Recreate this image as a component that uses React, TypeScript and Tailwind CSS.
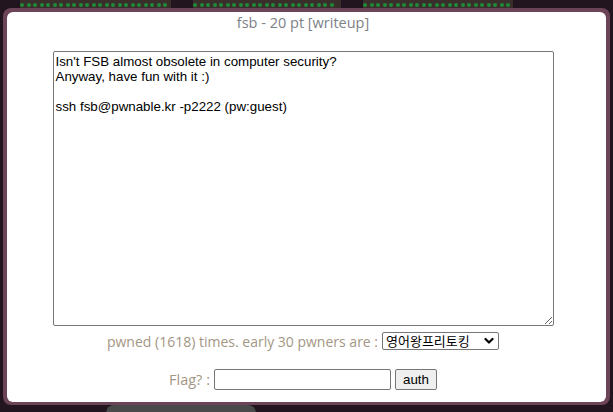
import React from "react";

const TEXT = {
  title: "fsb - 20 pt [writeup]",
  description: "Isn't FSB almost obsolete in computer security?\nAnyway, have fun with it :)\n\nssh fsb@pwnable.kr -p2222 (pw:guest)",
  pwned: "pwned (1618) times. early 30 pwners are :",
  flag: "Flag? :",
  auth: "auth",
};

const PWNERS = ["영어왕프리토킹", "hacker", "pwnie"];

function DotStrip({ width }: { width: number }) {
  const dots = Array.from({ length: Math.floor(width / 6.5) });
  return (
    <div className="flex h-[8px] items-end gap-[2.5px] bg-[#3a2e2a] pb-[1px]" style={{ width }}>
      {dots.map((_, i) => (
        <span key={i} className="h-[4px] w-[4px] shrink-0 rounded-full bg-[#1f8a3a]" />
      ))}
    </div>
  );
}

export default function App() {
  return (
    <div className="relative h-[412px] w-[613px] overflow-hidden bg-[#231520] font-['Open_Sans',sans-serif]">
      {/* header artwork peeking above the panel */}
      <div className="absolute left-0 top-0 flex w-full gap-[22px] pl-[20px]">
        <DotStrip width={151} />
        <DotStrip width={148} />
        <DotStrip width={150} />
      </div>
      {/* footer artwork peeking below */}
      <div className="absolute left-[106px] top-[405px] h-[12px] w-[150px] rounded-t-[8px] bg-[#4a4a4a]" />

      <div className="relative mx-[3px] mt-[8px] rounded-[8px] bg-[#6b4458] px-[4px] pb-[3px] pt-[4px]">
        <div className="flex h-[390px] flex-col items-center rounded-[6px] bg-white pr-[7px]">
          <h1 className="pt-[1px] text-[14.5px] leading-[20px] text-[#7d8188]">{TEXT.title}</h1>

          <textarea
            readOnly
            defaultValue={TEXT.description}
            className="mt-[18px] h-[275px] w-[501px] rounded-[2px] border border-[#767676] px-[2px] py-[2px] font-['Liberation_Sans',Arial,sans-serif] text-[13.33px] leading-[15px] text-black outline-none"
          />

          <div className="mt-[6px] flex h-[18px] items-center gap-[4px]">
            <span className="text-[14px] leading-[17px] text-[#a39684]">{TEXT.pwned}</span>
            <div className="relative flex">
              <select
                defaultValue={PWNERS[0]}
                className="h-[18px] w-[117px] appearance-none rounded-[2px] border border-[#767676] bg-white pl-[3px] font-['Noto_Sans_CJK_KR',sans-serif] text-[13px] leading-[16px] text-black"
              >
                {PWNERS.map((name) => (
                  <option key={name}>{name}</option>
                ))}
              </select>
              <svg
                className="pointer-events-none absolute right-[5px] top-[5px] h-[8px] w-[10px]"
                viewBox="0 0 10 8"
                fill="none"
                stroke="black"
                strokeWidth="2.2"
                strokeLinecap="round"
                strokeLinejoin="round"
              >
                <path d="M1.5 2 L5 5.5 L8.5 2" />
              </svg>
            </div>
          </div>

          <div className="mt-[19px] flex items-center gap-[4px]">
            <span className="text-[14.5px] leading-[21px] text-[#a39684]">{TEXT.flag}</span>
            <input className="h-[21px] w-[177px] rounded-[2px] border border-[#767676] bg-white outline-none" />
            <button className="h-[21px] w-[42px] rounded-[2px] border border-[#767676] bg-[#efefef] font-['Liberation_Sans',Arial,sans-serif] text-[13.33px] leading-[15px] text-black">
              {TEXT.auth}
            </button>
          </div>
        </div>
      </div>
    </div>
  );
}
